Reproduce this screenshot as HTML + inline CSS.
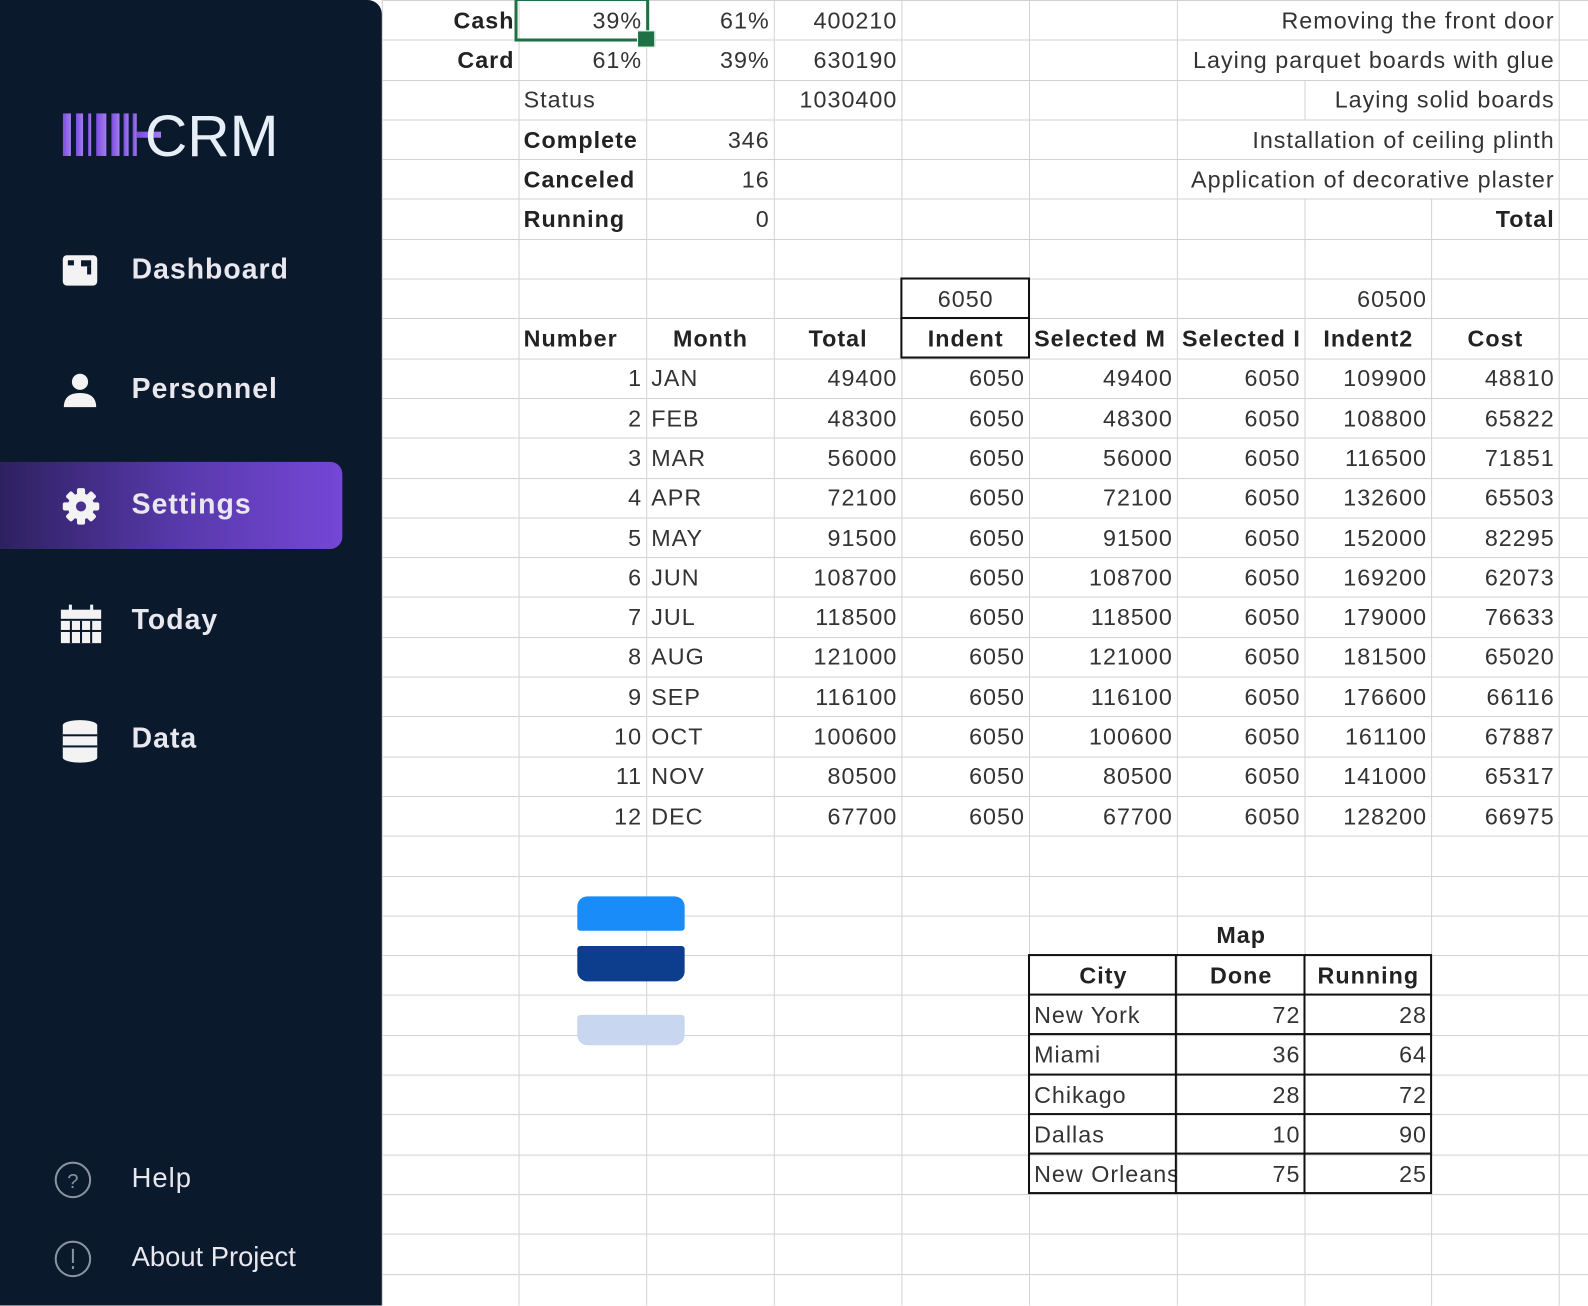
<!DOCTYPE html>
<html><head><meta charset="utf-8"><style>
html,body{margin:0;padding:0;width:1588px;height:1305px;overflow:hidden;background:#fff}
#w{position:absolute;left:0;top:0;width:1568px;height:1289px;transform:scale(1.0128);transform-origin:0 0;font-family:"Liberation Sans",sans-serif;overflow:hidden}
#sb{position:absolute;left:0;top:0;width:377px;height:1289px;background:#0b192c;border-top-right-radius:14px;z-index:2}
.nav{position:absolute;left:130px;color:#e8e8ee;font-size:28px;font-weight:bold;letter-spacing:1px}
.ic{position:absolute;left:60px}
#pill{position:absolute;left:0;top:456px;width:338px;height:86px;border-radius:0 12px 12px 0;background:linear-gradient(90deg,#2d2160,#5a3aae 55%,#7447d6)}
table{position:absolute;left:377px;top:0;width:1202px;border-collapse:collapse;table-layout:fixed;font-size:23px;color:#333;letter-spacing:1px}
td{border:1px solid #d2d2d2;height:39.3px;padding:0 4px;white-space:nowrap;overflow:visible;text-align:right;box-sizing:border-box}
td.l{text-align:left}td.c{text-align:center}
.b{font-weight:bold;color:#222}
.box{position:absolute;border:2px solid #111;box-sizing:border-box}
.hl{position:absolute;left:1015px;width:399px;height:2px;background:#111}
</style></head><body><div id="w">
<div id="sb">
 <svg style="position:absolute;left:62px;top:110px" width="100" height="46"><defs><linearGradient id="g" x1="0" x2="1"><stop offset="0" stop-color="#7a4de0"/><stop offset="1" stop-color="#a57cf0"/></linearGradient></defs>
 <g fill="url(#g)"><rect x="0" y="2" width="8" height="42"/><rect x="13" y="2" width="7" height="42"/><rect x="25" y="2" width="3" height="42"/><rect x="33" y="2" width="10" height="42"/><rect x="48" y="2" width="8" height="42"/><rect x="60" y="2" width="5" height="42"/><rect x="69" y="2" width="4" height="42"/><rect x="73" y="20" width="24" height="6"/></g></svg>
 <div style="position:absolute;left:143px;top:101px;font-size:58px;color:#e6eef8;letter-spacing:0px">CRM</div>
 <div id="pill"></div>
 <svg class="ic" style="top:250px" width="38" height="34"><rect x="2" y="2" width="34" height="30" rx="4" fill="#f3f3f3"/><rect x="7" y="7" width="6" height="5" fill="#0b192c"/><rect x="20" y="7" width="10" height="6" fill="#0b192c"/><rect x="26" y="13" width="4" height="8" fill="#0b192c"/></svg>
 <div class="nav" style="top:250px">Dashboard</div>
 <svg class="ic" style="top:366px" width="38" height="38"><circle cx="19" cy="11" r="8" fill="#f3f3f3"/><path d="M3 36 Q3 22 19 22 Q35 22 35 36Z" fill="#f3f3f3"/></svg>
 <div class="nav" style="top:368px">Personnel</div>
 <svg class="ic" style="top:480px" width="40" height="40"><g fill="#f3f3f3"><circle cx="20" cy="20" r="13"/><rect x="16" y="2" width="8" height="36" rx="2"/><rect x="2" y="16" width="36" height="8" rx="2"/><rect x="16" y="2" width="8" height="36" rx="2" transform="rotate(45 20 20)"/><rect x="16" y="2" width="8" height="36" rx="2" transform="rotate(-45 20 20)"/></g><circle cx="20" cy="20" r="5" fill="#4a3290"/></svg>
 <div class="nav" style="top:482px">Settings</div>
 <svg class="ic" style="top:596px" width="40" height="40"><g fill="#f3f3f3"><rect x="0" y="6" width="40" height="9"/><rect x="8" y="1" width="3" height="8"/><rect x="29" y="1" width="3" height="8"/><rect x="0" y="17" width="40" height="22"/></g><g fill="#0b192c"><rect x="9" y="17" width="2" height="22"/><rect x="19" y="17" width="2" height="22"/><rect x="29" y="17" width="2" height="22"/><rect x="0" y="26" width="40" height="2"/></g></svg>
 <div class="nav" style="top:596px">Today</div>
 <svg class="ic" style="top:710px" width="38" height="44"><g fill="#f3f3f3"><ellipse cx="19" cy="6" rx="17" ry="5"/><rect x="2" y="6" width="34" height="32"/><ellipse cx="19" cy="38" rx="17" ry="5"/></g><g fill="#0b192c"><rect x="2" y="15" width="34" height="2"/><rect x="2" y="26" width="34" height="2"/></g></svg>
 <div class="nav" style="top:713px">Data</div>
 <svg class="ic" style="left:53px;top:1146px" width="38" height="38"><circle cx="19" cy="19" r="17" fill="none" stroke="#8892a2" stroke-width="2"/><text x="19" y="27" font-size="20" fill="#8892a2" text-anchor="middle" font-family="Liberation Sans">?</text></svg>
 <div class="nav" style="top:1148px;font-weight:normal;font-size:27px;color:#e8e8ee">Help</div>
 <svg class="ic" style="left:53px;top:1224px" width="38" height="38"><circle cx="19" cy="19" r="17" fill="none" stroke="#8892a2" stroke-width="2"/><rect x="18" y="9" width="2" height="14" fill="#8892a2"/><rect x="18" y="26" width="2" height="3" fill="#8892a2"/></svg>
 <div class="nav" style="top:1226px;font-weight:normal;font-size:27px;color:#e8e8ee;letter-spacing:0">About Project</div>
</div>
<table>
<colgroup><col style="width:135px"><col style="width:126px"><col style="width:126px"><col style="width:126px"><col style="width:126px"><col style="width:146px"><col style="width:126px"><col style="width:125px"><col style="width:126px"><col style="width:40px"></colgroup>
<tr><td class="b">Cash</td><td>39%</td><td>61%</td><td>400210</td><td></td><td></td><td colspan="3">Removing the front door</td><td></td></tr>
<tr><td class="b">Card</td><td>61%</td><td>39%</td><td>630190</td><td></td><td></td><td colspan="3">Laying parquet boards with glue</td><td></td></tr>
<tr><td></td><td class="l">Status</td><td></td><td>1030400</td><td></td><td></td><td></td><td colspan="2">Laying solid boards</td><td></td></tr>
<tr><td></td><td class="l b">Complete</td><td>346</td><td></td><td></td><td></td><td colspan="3">Installation of ceiling plinth</td><td></td></tr>
<tr><td></td><td class="l b">Canceled</td><td>16</td><td></td><td></td><td></td><td colspan="3">Application of decorative plaster</td><td></td></tr>
<tr><td></td><td class="l b">Running</td><td>0</td><td></td><td></td><td></td><td></td><td></td><td class="b">Total</td><td></td></tr>
<tr><td></td><td></td><td></td><td></td><td></td><td></td><td></td><td></td><td></td><td></td></tr>
<tr><td></td><td></td><td></td><td></td><td class="c">6050</td><td></td><td></td><td>60500</td><td></td><td></td></tr>
<tr class="b"><td></td><td class="l">Number</td><td class="c">Month</td><td class="c">Total</td><td class="c">Indent</td><td class="l" style="overflow:hidden">Selected M</td><td class="l" style="overflow:hidden">Selected I</td><td class="c">Indent2</td><td class="c">Cost</td><td></td></tr>
<tr><td></td><td>1</td><td class="l">JAN</td><td>49400</td><td>6050</td><td>49400</td><td>6050</td><td>109900</td><td>48810</td><td></td></tr>
<tr><td></td><td>2</td><td class="l">FEB</td><td>48300</td><td>6050</td><td>48300</td><td>6050</td><td>108800</td><td>65822</td><td></td></tr>
<tr><td></td><td>3</td><td class="l">MAR</td><td>56000</td><td>6050</td><td>56000</td><td>6050</td><td>116500</td><td>71851</td><td></td></tr>
<tr><td></td><td>4</td><td class="l">APR</td><td>72100</td><td>6050</td><td>72100</td><td>6050</td><td>132600</td><td>65503</td><td></td></tr>
<tr><td></td><td>5</td><td class="l">MAY</td><td>91500</td><td>6050</td><td>91500</td><td>6050</td><td>152000</td><td>82295</td><td></td></tr>
<tr><td></td><td>6</td><td class="l">JUN</td><td>108700</td><td>6050</td><td>108700</td><td>6050</td><td>169200</td><td>62073</td><td></td></tr>
<tr><td></td><td>7</td><td class="l">JUL</td><td>118500</td><td>6050</td><td>118500</td><td>6050</td><td>179000</td><td>76633</td><td></td></tr>
<tr><td></td><td>8</td><td class="l">AUG</td><td>121000</td><td>6050</td><td>121000</td><td>6050</td><td>181500</td><td>65020</td><td></td></tr>
<tr><td></td><td>9</td><td class="l">SEP</td><td>116100</td><td>6050</td><td>116100</td><td>6050</td><td>176600</td><td>66116</td><td></td></tr>
<tr><td></td><td>10</td><td class="l">OCT</td><td>100600</td><td>6050</td><td>100600</td><td>6050</td><td>161100</td><td>67887</td><td></td></tr>
<tr><td></td><td>11</td><td class="l">NOV</td><td>80500</td><td>6050</td><td>80500</td><td>6050</td><td>141000</td><td>65317</td><td></td></tr>
<tr><td></td><td>12</td><td class="l">DEC</td><td>67700</td><td>6050</td><td>67700</td><td>6050</td><td>128200</td><td>66975</td><td></td></tr>
<tr><td></td><td></td><td></td><td></td><td></td><td></td><td></td><td></td><td></td><td></td></tr>
<tr><td></td><td></td><td></td><td></td><td></td><td></td><td></td><td></td><td></td><td></td></tr>
<tr><td></td><td></td><td></td><td></td><td></td><td></td><td class="c b">Map</td><td></td><td></td><td></td></tr>
<tr class="b"><td></td><td></td><td></td><td></td><td></td><td class="c">City</td><td class="c">Done</td><td class="c">Running</td><td></td><td></td></tr>
<tr><td></td><td></td><td></td><td></td><td></td><td class="l">New York</td><td>72</td><td>28</td><td></td><td></td></tr>
<tr><td></td><td></td><td></td><td></td><td></td><td class="l">Miami</td><td>36</td><td>64</td><td></td><td></td></tr>
<tr><td></td><td></td><td></td><td></td><td></td><td class="l">Chikago</td><td>28</td><td>72</td><td></td><td></td></tr>
<tr><td></td><td></td><td></td><td></td><td></td><td class="l">Dallas</td><td>10</td><td>90</td><td></td><td></td></tr>
<tr><td></td><td></td><td></td><td></td><td></td><td class="l" style="overflow:hidden">New Orleans</td><td>75</td><td>25</td><td></td><td></td></tr>
<tr><td></td><td></td><td></td><td></td><td></td><td></td><td></td><td></td><td></td><td></td></tr>
<tr><td></td><td></td><td></td><td></td><td></td><td></td><td></td><td></td><td></td><td></td></tr>
<tr><td></td><td></td><td></td><td></td><td></td><td></td><td></td><td></td><td></td><td></td></tr>
</table>
<div class="box" style="left:508px;top:-2px;width:133px;height:43px;border:3px solid #1e7145"></div>
<div style="position:absolute;left:629px;top:30px;width:16px;height:15px;background:#1e7145;border:1px solid #fff"></div>
<div class="box" style="left:889px;top:274px;width:128px;height:80px"></div>
<div style="position:absolute;left:889px;top:313px;width:128px;height:2px;background:#111"></div>
<div class="box" style="left:1015px;top:942px;width:399px;height:237px"></div>
<div style="position:absolute;left:1160px;top:942px;width:2px;height:237px;background:#111"></div>
<div style="position:absolute;left:1287px;top:942px;width:2px;height:237px;background:#111"></div>
<div class="hl" style="top:981px"></div>
<div class="hl" style="top:1020px"></div>
<div class="hl" style="top:1060px"></div>
<div class="hl" style="top:1099px"></div>
<div class="hl" style="top:1138px"></div>
<div style="position:absolute;left:570px;top:885px;width:106px;height:34px;background:#1a8cfa;border-radius:10px 10px 3px 3px"></div>
<div style="position:absolute;left:570px;top:934px;width:106px;height:35px;background:#0d3e8e;border-radius:3px 3px 10px 10px"></div>
<div style="position:absolute;left:570px;top:1002px;width:106px;height:30px;background:#c8d6f0;border-radius:3px 3px 10px 10px"></div>
</div></body></html>
